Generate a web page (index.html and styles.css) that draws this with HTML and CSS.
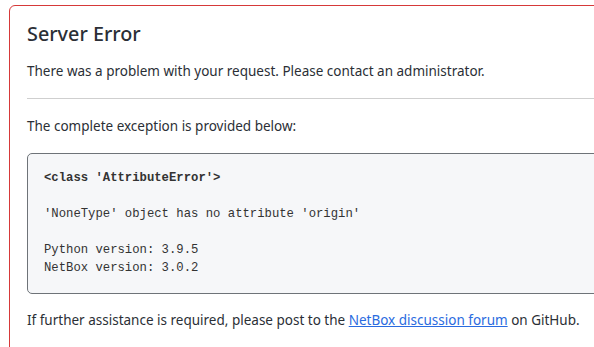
FILE: index.html
```html
<!DOCTYPE html>
<html lang="en">
<head>
    <meta charset="UTF-8">
    <meta name="viewport" content="width=device-width, initial-scale=1.0">
    <title>Server Error</title>
    <link rel="stylesheet" href="styles.css">
</head>
<body>

    <div class="card">
        <h2>Server Error</h2>
        <p>There was a problem with your request. Please contact an administrator.</p>
        <hr>
        <p>The complete exception is provided below:</p>
<pre class="trace"><strong>&lt;class 'AttributeError'&gt;</strong>

'NoneType' object has no attribute 'origin'

Python version: 3.9.5
NetBox version: 3.0.2</pre>
        <p>If further assistance is required, please post to the <a href="#">NetBox discussion forum</a> on GitHub.</p>
    </div>

</body>
</html>
```

FILE: styles.css
```css
html, body {
    overflow: hidden;
}
body {
    font-family: "Noto Sans", "Open Sans", sans-serif;
    font-size: 13.5px;
    line-height: 21px;
    color: #2b2f36;
    background-color: #ffffff;
    margin: 0;
    padding: 5px 0 0 9px;
}
.card {
    width: 640px;
    padding: 16px 16px 8px 17px;
    border: 1px solid #d63939;
    border-radius: 6px;
    background-color: #ffffff;
}
h2 {
    font-size: 19.8px;
    font-weight: 500;
    line-height: 24px;
    margin: 0 0 15px 0;
    color: #2b2f36;
}
p {
    margin: 0 0 16px 0;
}
hr {
    border: none;
    border-top: 1px solid #cfcfcf;
    margin: 16px 0 17px 0;
}
.trace {
    font-family: "Liberation Mono", monospace;
    font-size: 12.25px;
    line-height: 18px;
    margin: 0 0 16px 0;
    padding: 15px 16px 16px 16px;
    background-color: #f6f7f9;
    border: 1px solid #6e7378;
    border-radius: 5px;
    color: #333;
}
a {
    color: #2a6be0;
}
```
